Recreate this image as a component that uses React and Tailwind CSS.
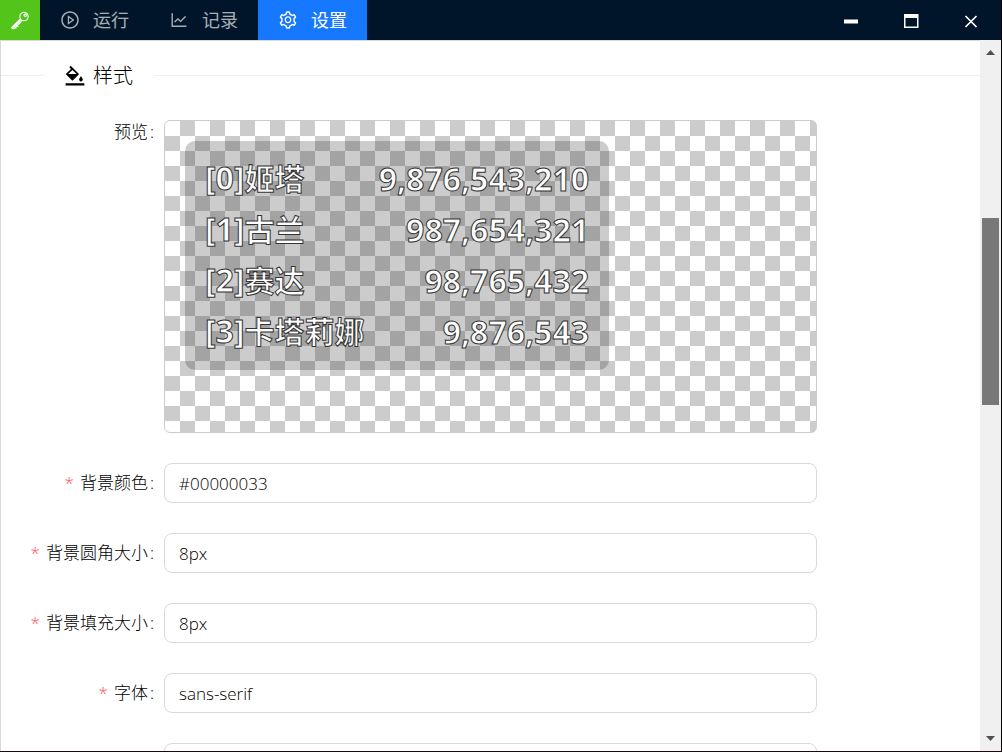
import { AiOutlinePlayCircle, AiOutlineLineChart, AiOutlineSetting, AiOutlineBgColors } from "react-icons/ai";

const tabs = [
  { label: "运行", Icon: AiOutlinePlayCircle },
  { label: "记录", Icon: AiOutlineLineChart },
  { label: "设置", Icon: AiOutlineSetting, active: true },
];

const rows = [
  ["[0]", "姬塔", "9,876,543,210"],
  ["[1]", "古兰", "987,654,321"],
  ["[2]", "赛达", "98,765,432"],
  ["[3]", "卡塔莉娜", "9,876,543"],
];

const fields = [
  { id: "bg-color", label: "背景颜色", value: "#00000033" },
  { id: "bg-radius", label: "背景圆角大小", value: "8px" },
  { id: "bg-padding", label: "背景填充大小", value: "8px" },
  { id: "font-family", label: "字体", value: "sans-serif" },
];

const inputClass =
  "h-10 min-w-0 grow rounded-lg border border-[#d9d9d9] bg-white px-3.5 text-black outline-none";

function KeyIcon() {
  return (
    <svg viewBox="0 0 20 20" className="size-5" fill="none" stroke="currentColor" strokeWidth="1.1" strokeLinecap="round" strokeLinejoin="round">
      <circle cx="14" cy="6.6" r="4.2" />
      <circle cx="15.2" cy="5.3" r="1.2" />
      <path d="M10.4 9 1.8 17.4 2.2 18.8 3.8 18.8 12 10.6M10.8 9.8 3 17.6M5 16.8l1.2 1.2M6.6 15.2l1.6 1.4M9 12.8l.8.8" />
    </svg>
  );
}

function TitleBar() {
  return (
    <header className="flex h-10 shrink-0 bg-[#001529]">
      <div className="flex w-10 items-center justify-center bg-[#52c41a] text-white">
        <KeyIcon />
      </div>
      <nav className="flex text-lg leading-10">
        {tabs.map(({ label, Icon, active }) => (
          <button
            key={label}
            type="button"
            className={
              active
                ? "flex items-center gap-[13px] bg-[#1677ff] px-5 text-white"
                : "flex items-center gap-[13px] px-5 text-white/65"
            }
          >
            <Icon className="size-5" />
            {label}
          </button>
        ))}
      </nav>
      <div className="ml-auto flex text-white">
        <button type="button" aria-label="Minimize" className="flex w-[60px] items-center justify-center">
          <svg viewBox="0 0 16 16" className="size-4"><path d="M1 7.5h14v4H1z" fill="currentColor" /></svg>
        </button>
        <button type="button" aria-label="Maximize" className="flex w-[60px] items-center justify-center">
          <svg viewBox="0 0 16 16" className="size-4"><path d="M1 2h14.500v14H1zM2.500 6v8.500h11.500V6z" fill="currentColor" fillRule="evenodd" /></svg>
        </button>
        <button type="button" aria-label="Close" className="flex w-[60px] items-center justify-center">
          <svg viewBox="0 0 16 16" className="size-4"><path d="M2.500 4l11 11M13.500 4l-11 11" stroke="currentColor" strokeWidth="1.7" /></svg>
        </button>
        <div className="w-px bg-black" />
      </div>
    </header>
  );
}

function Preview() {
  return (
    <div className="h-[313px] min-w-0 grow rounded-md border border-[#ccc] bg-[repeating-conic-gradient(#ccc_0_25%,#fff_0_50%)] bg-size-[30px_30px] p-5">
      <div className="w-106 rounded-[10px] bg-black/20 px-5 pt-3 pb-[13px]">
        <table className="w-full font-bold text-white [-webkit-text-stroke:1px_#333]">
          <tbody>
            {rows.map(([index, name, value]) => (
              <tr key={index} className="h-[51px]">
                <td className="p-0 text-[30px] leading-10">
                  <span className="text-[32px]">{index}</span>
                  {name}
                </td>
                <td className="p-0 text-right text-[32px] leading-10">{value}</td>
              </tr>
            ))}
          </tbody>
        </table>
      </div>
    </div>
  );
}

function Field({ id, label, value }) {
  return (
    <div className="flex items-center">
      <label htmlFor={id} className="w-[163px] shrink-0 pr-2.5 text-right text-black">
        <span className="mr-1.5 text-[#ff4d4f]">*</span>
        {label}
        <span className="ml-0.5">:</span>
      </label>
      <input id={id} type="text" defaultValue={value} className={inputClass} />
    </div>
  );
}

function ScrollBar() {
  return (
    <div className="flex w-[21px] shrink-0 flex-col items-center bg-[#f0f0f0] py-[10px]">
      <svg viewBox="0 0 9 5" className="h-[5px] w-[9px]"><path d="M4.5 0 9 5H0z" fill="#505050" /></svg>
      <div className="basis-[163px]" />
      <div className="w-[17px] basis-[187px] bg-[#787878]" />
      <div className="grow" />
      <svg viewBox="0 0 9 5" className="h-[5px] w-[9px]"><path d="M0 0h9L4.5 5z" fill="#505050" /></svg>
    </div>
  );
}

export default function App() {
  return (
    <div className="flex h-screen flex-col overflow-hidden border-b border-[#1a0a0a] bg-white font-['Open_Sans','Noto_Sans_CJK_SC',sans-serif] text-[17px]">
      <TitleBar />
      <div className="flex min-h-0 grow border-r border-black">
        <main className="min-w-0 grow overflow-hidden border-t border-l border-[#d9d9d9] font-light">
          <h2 className="mt-[15px] flex items-center text-xl text-black">
            <span className="h-px w-[43px] bg-[#f0f0f0]" />
            <span className="flex items-center gap-1.5 pt-0.5 pr-[21px] pl-[19px] leading-9">
              <AiOutlineBgColors className="size-6" />
              样式
            </span>
            <span className="h-px grow bg-[#f0f0f0]" />
          </h2>
          <form className="mt-[26px] flex w-5/6 flex-col gap-[30px]">
            <div className="flex items-start">
              <div className="w-[163px] shrink-0 pr-2.5 text-right leading-6 text-black">
                预览<span className="ml-0.5">:</span>
              </div>
              <Preview />
            </div>
            {fields.map((field) => (
              <Field key={field.id} {...field} />
            ))}
            <div className="flex pl-[163px]">
              <input type="text" aria-label="字体大小" className={inputClass} />
            </div>
          </form>
        </main>
        <ScrollBar />
      </div>
    </div>
  );
}
